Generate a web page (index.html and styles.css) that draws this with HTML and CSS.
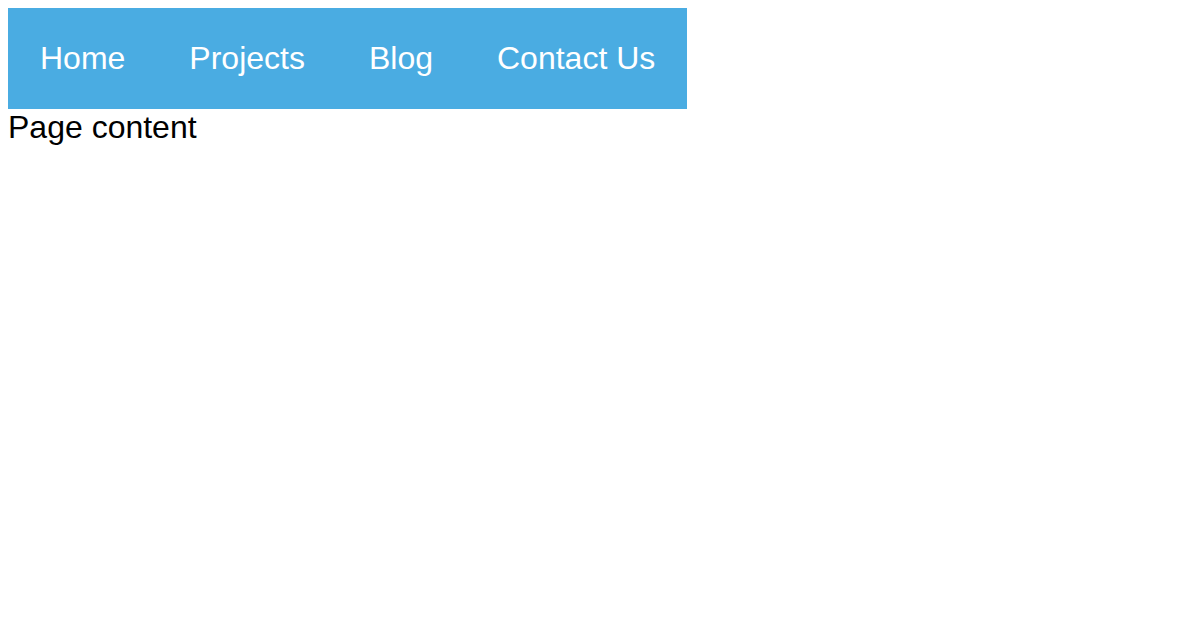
FILE: index.html
```html
<!DOCTYPE html>
<html>
<head>
<meta charset="utf-8">
<link rel="stylesheet" href="styles.css">
</head>
<body>
<nav class="menu">
  <a class="menu-link" href="#">Home</a>
  <a class="menu-link" href="#">Projects</a>
  <a class="menu-link" href="#">Blog</a>
  <a class="menu-link" href="#">Contact Us</a>
</nav>
<div class="content">Page content</div>
</body>
</html>
```
FILE: styles.css
```css
body {
  margin: 8px;
  font-family: "Liberation Sans", Arial, sans-serif;
  font-size: 32px;
  color: #000;
  background: #fff;
}
.menu {
  display: inline-flex;
  background: #4aace2;
}
.menu-link {
  display: block;
  padding: 32px;
  color: #fff;
  text-decoration: none;
}
.content {
  display: block;
}
```
